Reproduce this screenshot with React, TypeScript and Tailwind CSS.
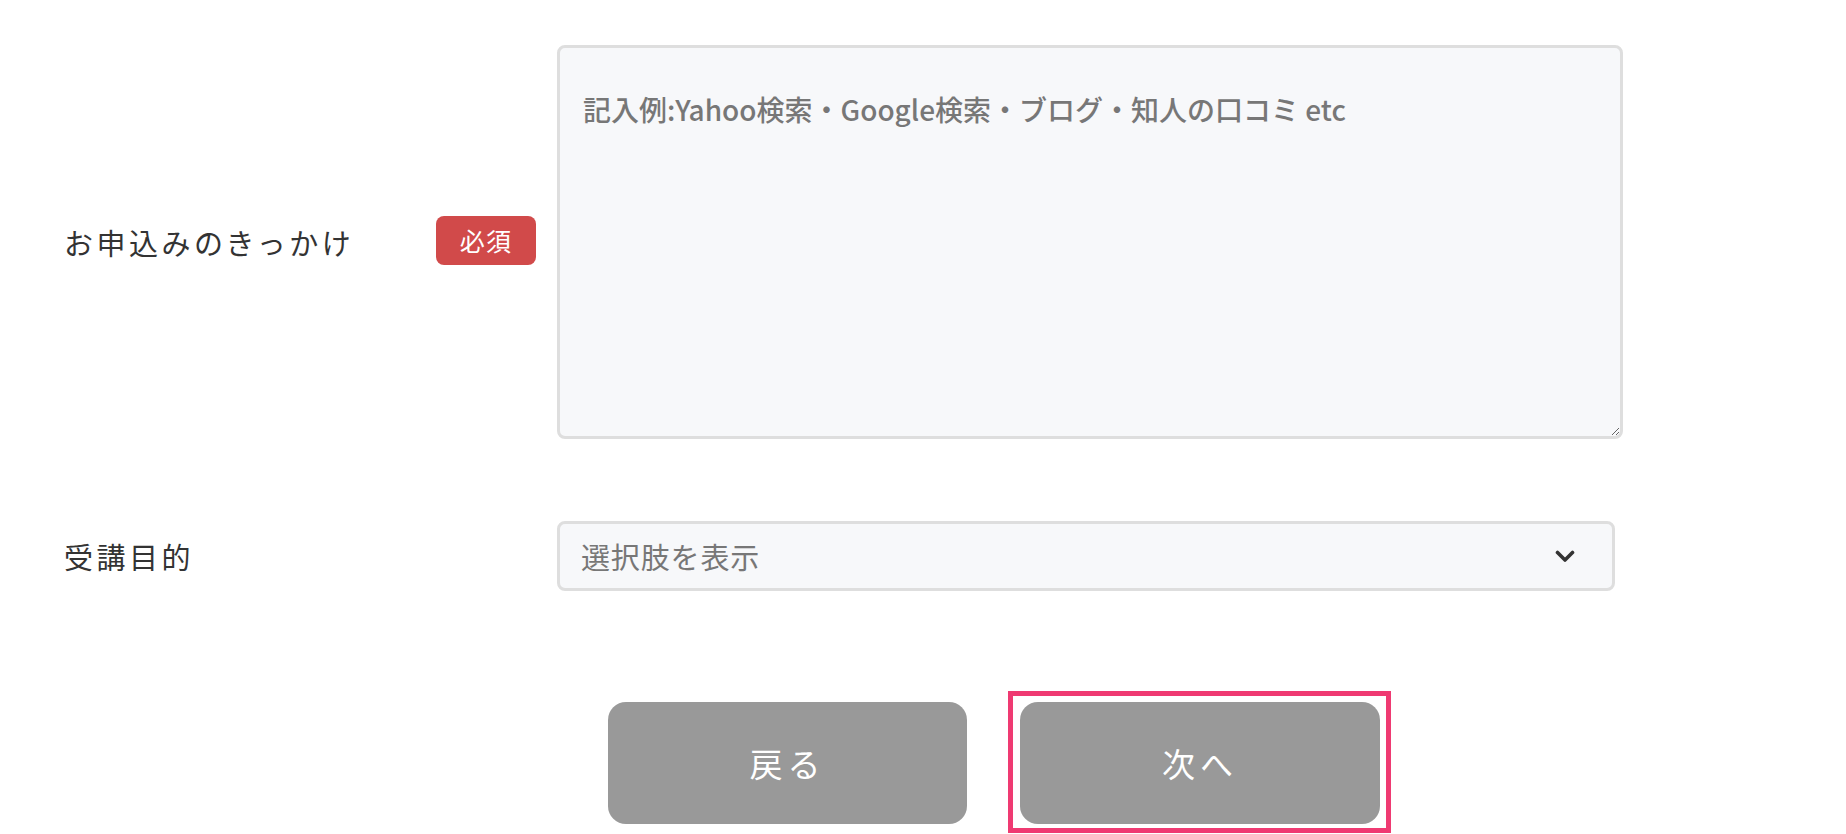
import React from "react";

const font = { fontFamily: '"Noto Sans CJK JP", "Noto Sans", sans-serif' };

export default function App() {
  return (
    <div className="w-[1846px] h-[834px] bg-white overflow-hidden text-[#333]" style={font}>
      <div className="flex flex-col pl-[64px] pt-[45px]">
        {/* Row 1 */}
        <div className="flex items-center">
          <div className="w-[372px] text-[29px] tracking-[0.12em] leading-none text-[#333]">
            お申込みのきっかけ
          </div>
          <div className="w-[100px] h-[49px] mb-[4px] rounded-[8px] bg-[#d14a4a] text-white text-[25px] leading-none tracking-[0.05em] flex items-center justify-center">
            必須
          </div>
          <textarea
            className="ml-[21px] w-[1066px] h-[394px] rounded-[8px] border-[3px] border-[#dedede] bg-[#f7f8fa] pl-[23px] pr-[23px] pt-[39px] text-[28px] leading-[1.6] font-medium text-[#333] placeholder:text-[#777] outline-none"
            placeholder="記入例:Yahoo検索・Google検索・ブログ・知人の口コミ etc"
            style={font}
          />
        </div>

        {/* Row 2 */}
        <div className="flex items-center mt-[82px]">
          <div className="w-[493px] text-[29px] tracking-[0.12em] leading-none text-[#333]">
            受講目的
          </div>
          <div className="w-[1058px] h-[70px] rounded-[8px] border-[3px] border-[#dedede] bg-[#f7f8fa] flex items-center justify-between pl-[21px] pr-[37px]">
            <span className="text-[29px] tracking-[0.03em] leading-none text-[#777]">選択肢を表示</span>
            <svg width="20" height="13" viewBox="0 0 20 13" fill="none">
              <path d="M2.5 2.5 L10 10 L17.5 2.5" stroke="#333" strokeWidth="3.6" strokeLinecap="round" strokeLinejoin="round" />
            </svg>
          </div>
        </div>

        {/* Buttons */}
        <div className="flex mt-[111px] pl-[544px] gap-[53px]">
          <button className="w-[359px] h-[122px] rounded-[18px] bg-[#999999] text-white text-[33px] tracking-[0.15em] leading-none" style={font}>
            戻る
          </button>
          <div className="relative">
            <div className="absolute left-[-12px] right-[-11px] top-[-11px] bottom-[-9px] border-[5px] border-[#ef3a72]" />
            <button className="relative w-[360px] h-[122px] rounded-[18px] bg-[#999999] text-white text-[33px] tracking-[0.15em] leading-none" style={font}>
              次へ
            </button>
          </div>
        </div>
      </div>
    </div>
  );
}
